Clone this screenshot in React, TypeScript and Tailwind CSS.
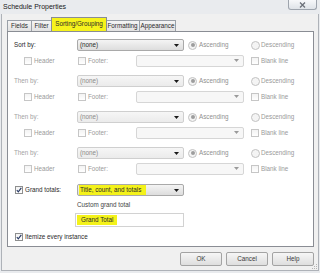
import React from 'react'

const FONT = { fontFamily: '"Liberation Sans", Arial, sans-serif' }

function Arrow({ muted }: { muted?: boolean }) {
  return (
    <svg width="5" height="3" viewBox="0 0 5 3" className="shrink-0">
      <path d="M0 0h5L2.5 3z" fill={muted ? '#9a9a9a' : '#1a1a1a'} />
    </svg>
  )
}

function Check({ checked, muted }: { checked?: boolean; muted?: boolean }) {
  return (
    <span
      className={`flex h-[8px] w-[8px] shrink-0 items-center justify-center border bg-gradient-to-b from-[#f3f3f3] to-white ${
        muted ? 'border-[#c6c6c6]' : 'border-[#8e8f8f]'
      }`}
    >
      {checked && (
        <svg width="6" height="6" viewBox="0 0 6 6">
          <path d="M0.8 3.2 2.3 4.8 5.3 0.9" fill="none" stroke="#2a3b66" strokeWidth="1.2" />
        </svg>
      )}
    </span>
  )
}

function Radio({ on }: { on?: boolean }) {
  return (
    <span className="flex h-[9px] w-[9px] shrink-0 items-center justify-center rounded-full border border-[#c2c2c2] bg-[#f4f4f4]">
      {on && <span className="h-[4px] w-[4px] rounded-full bg-[#9d9d9d]" />}
    </span>
  )
}

function Combo({
  width,
  text,
  kind,
  highlight,
}: {
  width: string
  text?: string
  kind: 'on' | 'soft' | 'off'
  highlight?: boolean
}) {
  const box =
    kind === 'on'
      ? 'border-[#a9a9a9] bg-gradient-to-b from-[#f4f4f4] to-[#dddddd] text-[#2a2a2a]'
      : kind === 'soft'
        ? 'border-[#cfcfcf] bg-gradient-to-b from-[#f6f6f6] to-[#ebebeb] text-[#8a8a8a]'
        : 'border-[#d6d6d6] bg-[#f7f7f7] text-[#999]'
  return (
    <div className={`${width} flex h-[12px] shrink-0 items-center justify-between rounded-[2px] border pl-[1px] pr-[4px] ${box}`}>
      <span className={`pl-[1px] pr-[2px] leading-[10px] ${highlight ? 'bg-[#f4f21a] pr-[5px]' : ''}`}>{text}</span>
      <Arrow muted={kind === 'off'} />
    </div>
  )
}

function Group({ label, first }: { label: string; first?: boolean }) {
  return (
    <div className="flex flex-col gap-[4px]">
      <div className="flex h-[12px] items-center">
        <span className={`ml-[6px] w-[63px] shrink-0 ${first ? 'text-[#2a2a2a]' : 'text-[#a3a3a3]'}`}>{label}</span>
        <Combo width="w-[107px]" text="(none)" kind={first ? 'on' : 'soft'} />
        <div className="ml-[4px] flex w-[63px] items-center gap-[2px] text-[#8f8f8f]">
          <Radio on />
          <span>Ascending</span>
        </div>
        <div className="flex items-center gap-[1px] text-[#9a9a9a]">
          <Radio />
          <span>Descending</span>
        </div>
      </div>
      <div className="flex h-[11px] items-center text-[#9a9a9a]">
        <div className="ml-[16px] flex w-[54px] items-center gap-[2px]">
          <Check muted />
          <span>Header</span>
        </div>
        <div className="flex w-[58px] items-center gap-[2px]">
          <Check muted />
          <span>Footer:</span>
        </div>
        <Combo width="w-[108px]" kind="off" />
        <div className="ml-[7px] flex items-center gap-[2px]">
          <Check muted />
          <span>Blank line</span>
        </div>
      </div>
    </div>
  )
}

const tabs = ['Fields', 'Filter', 'Sorting/Grouping', 'Formatting', 'Appearance']
const tabWidths = ['w-[25px]', 'w-[21px]', 'w-[56px]', 'w-[35px]', 'w-[37px]']

export default function App() {
  return (
    <div className="relative h-[273px] w-[320px] overflow-hidden bg-[#e9ebee] text-[6.3px] text-[#2a2a2a]" style={FONT}>
      {/* title bar */}
      <div className="flex h-[14px] items-start justify-between">
        <span className="pl-[3px] pt-[3px] text-[7px] leading-[8px] text-[#1a1a1a]">Schedule Properties</span>
        <div className="mr-[3px] flex h-[10px] w-[29px] items-center justify-center rounded-b-[3px] border border-t-0 border-[#9ea4ad] bg-gradient-to-b from-[#f7f8fa] to-[#dfe3e8]">
          <svg width="7" height="6" viewBox="0 0 7 6">
            <path d="M1 0.5 6 5.5M6 0.5 1 5.5" stroke="#6c7079" strokeWidth="1.3" />
          </svg>
        </div>
      </div>

      {/* client area */}
      <div className="mx-[1px] flex h-[257px] flex-col border-x border-b border-[#aeb2b8] bg-[#f0f0f0]">
        {/* tabs */}
        <div className="ml-[5px] mt-[4px] flex h-[13px] items-end">
          {tabs.map((t, i) => {
            const active = i === 2
            return (
              <div
                key={t}
                className={`${tabWidths[i]} flex shrink-0 items-center justify-center border border-b-0 ${
                  active
                    ? '-mx-[1px] relative z-10 h-[14px] border-[#8a8d94] bg-[#f6f31c] pb-[2px]'
                    : 'h-[11px] border-[#9aa0a8] bg-gradient-to-b from-[#f4f4f4] to-[#e2e2e2]'
                } ${i > 0 && !active ? '-ml-[1px]' : ''}`}
              >
                <span className="leading-[8px]">{t}</span>
              </div>
            )
          })}
        </div>

        {/* panel */}
        <div className="ml-[5px] mr-[4px] flex h-[216px] flex-col border border-[#8a8d94] bg-white pt-[7px]">
          <div className="flex flex-col gap-[9px]">
            <Group label="Sort by:" first />
            <Group label="Then by:" />
            <Group label="Then by:" />
            <Group label="Then by:" />
          </div>

          <div className="mt-[10px] flex h-[12px] items-center">
            <div className="ml-[7px] flex w-[62px] shrink-0 items-center gap-[2px]">
              <Check checked />
              <span>Grand totals:</span>
            </div>
            <Combo width="w-[107px]" text="Title, count, and totals" kind="on" highlight />
          </div>
          <div className="ml-[69px] mt-[4px] flex h-[10px] items-center text-[#444]">Custom grand total</div>
          <div className="ml-[67px] mt-[3px] flex h-[14px] w-[109px] items-center border border-[#d2d2d2] bg-white pl-[1px]">
            <span className="bg-[#f4f21a] px-[4px] leading-[10px]">Grand Total</span>
          </div>
          <div className="ml-[7px] mt-[5px] flex h-[10px] items-center gap-[2px]">
            <Check checked />
            <span>Itemize every instance</span>
          </div>
        </div>

        {/* buttons */}
        <div className="mr-[4px] mt-[5px] flex justify-end gap-[4px]">
          {['OK', 'Cancel', 'Help'].map((b) => (
            <div
              key={b}
              className="flex h-[14px] w-[42px] items-center justify-center rounded-[2px] border border-[#a3a3a3] bg-gradient-to-b from-[#f6f6f6] to-[#dedede] text-[#3a3a3a]"
            >
              {b}
            </div>
          ))}
        </div>
      </div>

      {/* size grip */}
      <svg className="absolute bottom-[3px] right-[2px]" width="6" height="6" viewBox="0 0 6 6">
        <g fill="#b4b4b4">
          <rect x="4" y="0" width="1" height="1" />
          <rect x="2" y="2" width="1" height="1" />
          <rect x="4" y="2" width="1" height="1" />
          <rect x="0" y="4" width="1" height="1" />
          <rect x="2" y="4" width="1" height="1" />
          <rect x="4" y="4" width="1" height="1" />
        </g>
      </svg>
    </div>
  )
}
